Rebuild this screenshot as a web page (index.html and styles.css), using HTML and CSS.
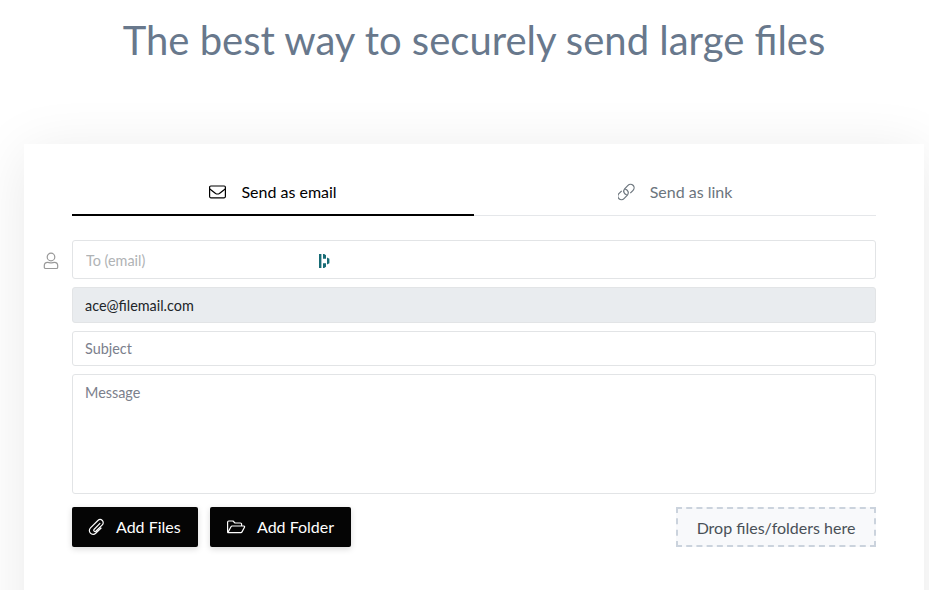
FILE: index.html
```html
<!DOCTYPE html>
<html lang="en">
<head>
    <meta charset="utf-8">
    <meta name="viewport" content="width=device-width, initial-scale=1.0">
    <title>Send large files</title>
    <link rel="stylesheet" href="styles.css">
</head>
<body>
    <h1>The best way to securely send large files</h1>
    <form class="card" id="transferForm">
        <div class="tabs">
            <a class="tab active">
                <svg class="tabIcon" width="17" height="18" viewBox="0 0 17 18">
                    <rect x=".6" y="4" width="15.8" height="11.8" rx="1.2"/>
                    <path d="M.8 7 L6.6 11.4 Q8.5 12.6 10.4 11.4 L16.2 7"/>
                </svg>
                <span>Send as email</span>
            </a>
            <a class="tab">
                <svg class="tabIcon" width="17" height="18" viewBox="0 0 17 18">
                    <path d="M8.8 11.9 A3.7 3.7 0 0 1 6.6 5.9 L10 2.4 A3.5 3.5 0 0 1 15.1 7.3 L12.3 10.1"/>
                    <path d="M7.2 6.1 A3.7 3.7 0 0 1 9.4 12.1 L6 15.6 A3.5 3.5 0 0 1 .9 10.7 L3.7 7.9"/>
                </svg>
                <span>Send as link</span>
            </a>
        </div>
        <div class="toRow">
            <svg class="userIcon" width="16" height="18" viewBox="0 0 16 18">
                <circle cx="8" cy="5" r="3.8"/>
                <path d="M4.6 10.3 C5.8 10.3 6.5 10.9 8 10.9 S10.2 10.3 11.4 10.3 A3.3 3.3 0 0 1 14.7 13.6 V15.2 A1.3 1.3 0 0 1 13.4 16.5 H2.6 A1.3 1.3 0 0 1 1.3 15.2 V13.6 A3.3 3.3 0 0 1 4.6 10.3 Z"/>
            </svg>
            <input type="text" class="field to" placeholder="To (email)">
            <svg class="fillIcon" width="12" height="16" viewBox="0 0 12 16">
                <path d="M1 1h2.4v14H1zM5 1h1.2L8 2.2v3.5H5zM5 10.3h3v3.5L6.2 15H5zM9 4.5l2.4 1.2v4.6L9 11.5z"/>
            </svg>
        </div>
        <input type="text" class="field from" value="ace@filemail.com" readonly>
        <input type="text" class="field subject" placeholder="Subject">
        <textarea class="field message" placeholder="Message"></textarea>
        <div class="actions">
            <button type="button" class="addFiles">
                <svg width="17" height="18" viewBox="0 0 17 18">
                    <path d="M12.2 5.2 L6 11.5 A1.3 1.3 0 0 0 7.8 13.3 L14.3 6.9 A3.1 3.1 0 0 0 9.9 2.5 L2.5 9.9 A3.7 3.7 0 0 0 7.7 15.3 L13.4 9.8"/>
                </svg>
                <span>Add Files</span>
            </button>
            <button type="button" class="addFolder">
                <svg width="20" height="18" viewBox="0 0 20 18">
                    <path d="M1.6 14.6 V4.2 A1.2 1.2 0 0 1 2.8 3 H7 L9 5 H14.4 A1.2 1.2 0 0 1 15.6 6.2 V8"/>
                    <path d="M1.8 14.6 L5 8.7 A1.3 1.3 0 0 1 6.1 8 H17.8 A.8 .8 0 0 1 18.5 9.2 L16 13.9 A1.3 1.3 0 0 1 14.9 14.6 Z"/>
                </svg>
                <span>Add Folder</span>
            </button>
            <div class="dropZone">Drop files/folders here</div>
        </div>
    </form>
</body>
</html>
```

FILE: styles.css
```css
* {
    box-sizing: border-box;
}
body {
    margin: 0;
    padding: 0;
    height: 590px;
    overflow: hidden;
    background-color: #fff;
    font-family: Lato, "Liberation Sans", sans-serif;
    font-size: 16px;
}
h1 {
    margin: 0;
    padding: 16px 0 0 19px;
    height: 144px;
    font-size: 40px;
    font-weight: 400;
    line-height: 48px;
    color: #68788c;
    text-align: center;
    white-space: nowrap;
}
.card {
    width: 900px;
    height: 600px;
    margin-left: 24px;
    padding: 24px 48px;
    background-color: #fff;
    box-shadow: 0 8px 56px rgba(0, 0, 0, 0.09);
}
svg {
    flex: none;
    fill: none;
    stroke: currentColor;
    stroke-width: 1.2;
    stroke-linejoin: round;
}
.tabs {
    display: flex;
    height: 48px;
    margin-bottom: 24px;
}
.tab {
    flex: 1;
    display: flex;
    align-items: center;
    justify-content: center;
    border-bottom: 1px solid #e5e7ea;
    color: #6c757d;
}
.tab.active {
    border-bottom: 2px solid #000;
    color: #000;
}
.tabIcon {
    margin-right: 15px;
}
.toRow {
    position: relative;
    display: flex;
}
.userIcon {
    position: absolute;
    left: -29px;
    top: 12px;
    color: #999;
}
.fillIcon {
    position: absolute;
    left: 246px;
    top: 13px;
    fill: #176b75;
    stroke: none;
}
.field {
    display: block;
    width: 100%;
    margin: 0 0 8px;
    padding: 0 12px 1px;
    border: 1px solid #e2e4e6;
    border-radius: 3px;
    background-color: #fff;
    color: #212529;
    font-family: inherit;
    font-size: 14.4px;
    outline: none;
}
.field::placeholder {
    color: #7b808c;
    opacity: 1;
}
.to {
    height: 39px;
    padding: 2px 13px 0;
}
.to::placeholder {
    color: #b0b3b5;
}
.from {
    height: 36px;
    padding: 1px 12px 0;
    background-color: #e9ecef;
}
.subject {
    height: 35px;
}
.message {
    height: 120px;
    margin-bottom: 13px;
    padding-top: 9px;
    resize: none;
}
.actions {
    display: flex;
}
button {
    display: flex;
    align-items: center;
    height: 40px;
    margin: 0 12px 0 0;
    padding: 0 16px 1px;
    border: none;
    border-radius: 2px;
    background-color: #050505;
    box-shadow: 0 2px 6px rgba(0, 0, 0, 0.15);
    color: #fff;
    font-family: inherit;
    font-size: 16px;
    cursor: pointer;
}
button svg {
    margin-right: 11px;
}
.addFiles {
    width: 126px;
}
.addFolder {
    width: 141px;
}
.dropZone {
    width: 200px;
    height: 40px;
    margin-left: auto;
    border: 2px dashed #cbd3dd;
    background-color: #f8f9fb;
    color: #495057;
    line-height: 38px;
    text-align: center;
}
```
